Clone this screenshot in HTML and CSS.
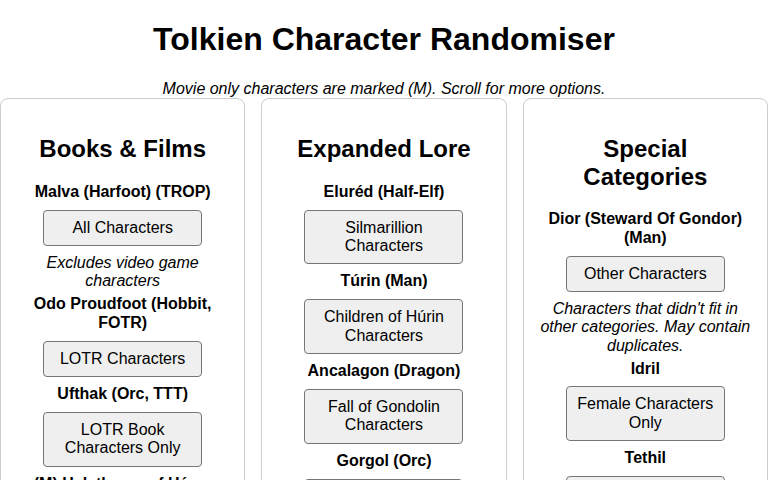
FILE: index.html
```html
<!DOCTYPE html>
<html lang="en">
<head>
  <meta charset="UTF-8">
  <title>Tolkien Character Randomiser</title>
  <link rel="stylesheet" href="styles.css">
</head>
<body>
  <h1>Tolkien Character Randomiser</h1>
  <p class="note">Movie only characters are marked (M). Scroll for more options.</p>

  <div class="columns">
    <div class="card">
      <h2>Books &amp; Films</h2>

      <p class="name">Malva (Harfoot) (TROP)</p>
      <button>All Characters</button>
      <p class="desc">Excludes video game characters</p>

      <p class="name">Odo Proudfoot (Hobbit, FOTR)</p>
      <button>LOTR Characters</button>

      <p class="name">Ufthak (Orc, TTT)</p>
      <button>LOTR Book Characters Only</button>

      <p class="name">(M) Haleth son of Háma (Man, TTT)</p>
      <button>LOTR Film Characters Only</button>
    </div>

    <div class="card">
      <h2>Expanded Lore</h2>

      <p class="name">Eluréd (Half-Elf)</p>
      <button>Silmarillion Characters</button>

      <p class="name">Túrin (Man)</p>
      <button>Children of Húrin Characters</button>

      <p class="name">Ancalagon (Dragon)</p>
      <button>Fall of Gondolin Characters</button>

      <p class="name">Gorgol (Orc)</p>
      <button>Hobbit Characters</button>
    </div>

    <div class="card">
      <h2>Special Categories</h2>

      <p class="name">Dior (Steward Of Gondor) (Man)</p>
      <button>Other Characters</button>
      <p class="desc">Characters that didn't fit in other categories. May contain duplicates.</p>

      <p class="name">Idril</p>
      <button>Female Characters Only</button>

      <p class="name">Tethil</p>
      <button>Elf Characters Only</button>
    </div>
  </div>
</body>
</html>
```

FILE: styles.css
```css
* {
  box-sizing: border-box;
}

body {
  margin: 0;
  font-family: "Liberation Sans", Arial, sans-serif;
  line-height: 1.15;
  color: #000;
  background: #fff;
  text-align: center;
}

h1 {
  font-size: 32px;
  margin: 0.67em 0;
}

.note {
  font-style: italic;
  margin: 0;
}

.columns {
  display: grid;
  grid-template-columns: repeat(3, 1fr);
  gap: 16px;
}

.card {
  border: 1px solid #ccc;
  border-radius: 8px;
  padding: 16px;
  display: flex;
  flex-direction: column;
  align-items: center;
}

.card h2 {
  font-size: 24px;
  margin: 20px 0;
}

.name {
  font-weight: bold;
  margin: 0;
}

.desc {
  font-style: italic;
  margin: 0 0 4.5px;
}

button {
  width: 159px;
  margin: 8.5px 0 8px;
  padding: 8px;
  font-family: inherit;
  font-size: 16px;
  line-height: inherit;
  color: #000;
  background: #efefef;
  border: 1px solid #767676;
  border-radius: 4px;
}
```
